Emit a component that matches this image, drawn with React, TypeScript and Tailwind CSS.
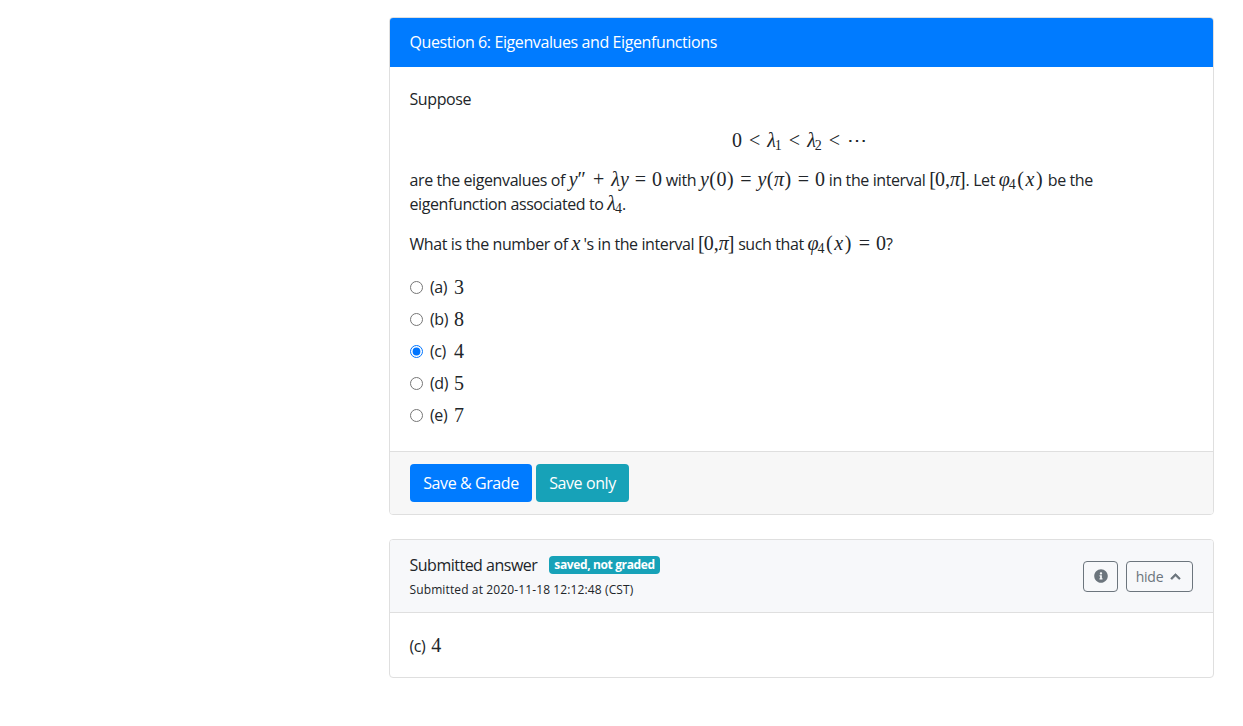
import { FaChevronUp, FaInfoCircle } from 'react-icons/fa';
import type { ReactNode } from 'react';

function Tex({ children, className = '' }: { children: ReactNode; className?: string }) {
  return (
    <span className={`font-['Liberation_Serif',serif] text-[20px] leading-none tracking-normal whitespace-nowrap ${className}`}>
      {children}
    </span>
  );
}

function V({ children }: { children: ReactNode }) {
  return <i>{children}</i>;
}

function Sub({ children }: { children: ReactNode }) {
  return <span className="text-[14px] leading-none relative top-[3px] ml-[-1px]">{children}</span>;
}

function Rel({ children }: { children: ReactNode }) {
  return <span className="mx-[6px]">{children}</span>;
}

function RelWide({ children }: { children: ReactNode }) {
  return <span className="mx-[7px]">{children}</span>;
}

function Paren({ children }: { children: ReactNode }) {
  return <span className="mx-[0.5px]">{children}</span>;
}

function ParenWide({ children }: { children: ReactNode }) {
  return <span className="mx-[1.5px]">{children}</span>;
}

function Interval() {
  return (
    <Tex>
      <span className="mr-[-1px]">[</span>0,
      <V>π</V>
      <span className="ml-[-1px]">]</span>
    </Tex>
  );
}

const options = [
  { key: 'a', value: '3' },
  { key: 'b', value: '8' },
  { key: 'c', value: '4', checked: true },
  { key: 'd', value: '5' },
  { key: 'e', value: '7' },
];

export default function App() {
  return (
    <div className="font-['Open_Sans','Noto_Sans',sans-serif] min-h-[726px] bg-white pl-[389px] pr-[29px] pt-[17px] text-[16px] leading-6 text-[#212529] tracking-[-0.4px]">
      <div className="rounded border border-[#dfdfdf] overflow-hidden">
        <div className="bg-[#007bff] text-white pl-[19.5px] pr-5 h-[49px] pb-px flex items-center">
          Question 6: Eigenvalues and Eigenfunctions
        </div>
        <div className="pl-[19.5px] pr-5 pt-5 pb-[19px]">
          <p className="mb-4">Suppose</p>
          <div className="h-[26px] mb-[15px] flex items-center justify-center">
            <Tex>
              0<RelWide>&lt;</RelWide>
              <V>λ</V>
              <Sub>1</Sub>
              <RelWide>&lt;</RelWide>
              <V>λ</V>
              <Sub>2</Sub>
              <RelWide>&lt;</RelWide>
              <span className="tracking-[3.5px]">⋯</span>
            </Tex>
          </div>
          <p className="mb-4">
            are the eigenvalues of{' '}
            <Tex>
              <V>y</V>″<span className="mx-[7px]">+</span>
              <V>λy</V>
              <Rel>=</Rel>0
            </Tex>{' '}
            with{' '}
            <Tex>
              <V>y</V>
              <Paren>(</Paren>0<Paren>)</Paren>
              <Rel>=</Rel>
              <V>y</V>
              <Paren>(</Paren>
              <V>π</V>
              <Paren>)</Paren>
              <Rel>=</Rel>0
            </Tex>{' '}
            in the interval <Interval />
            . Let{' '}
            <Tex>
              <V>φ</V>
              <Sub>4</Sub>
              <ParenWide>(</ParenWide>
              <V>x</V>
              <ParenWide>)</ParenWide>
            </Tex>{' '}
            be the
            <br />
            eigenfunction associated to{' '}
            <Tex>
              <V>λ</V>
              <Sub>4</Sub>
            </Tex>
            .
          </p>
          <p className="mb-4">
            What is the number of{' '}
            <Tex className="mr-[3px]">
              <V>x</V>
            </Tex>
            's in the interval <Interval /> such that{' '}
            <Tex>
              <V>φ</V>
              <Sub>4</Sub>
              <ParenWide>(</ParenWide>
              <V>x</V>
              <ParenWide>)</ParenWide>
              <Rel>=</Rel>0
            </Tex>
            ?
          </p>
          <div className="-mt-px">
            {options.map((o) => (
              <label key={o.key} className="flex items-center h-8">
                <input
                  type="radio"
                  name="answer"
                  defaultChecked={o.checked}
                  className="w-[13px] h-[13px] mr-[7.5px] m-0 shrink-0"
                />
                <span className="w-6">({o.key})</span>
                <Tex>{o.value}</Tex>
              </label>
            ))}
          </div>
        </div>
        <div className="border-t border-[#dfdfdf] bg-[#f7f7f7] px-5 py-3 mt-px flex gap-1">
          <button className="h-[38px] w-[122px] rounded bg-[#007bff] text-white">Save &amp; Grade</button>
          <button className="h-[38px] w-[93px] rounded bg-[#17a2b8] text-white">Save only</button>
        </div>
      </div>

      <div className="mt-6 rounded border border-[#dfdfdf] overflow-hidden">
        <div className="h-[73px] bg-[#f7f8fa] border-b border-[#dfdfdf] pl-[19.5px] pr-5 flex items-center justify-between">
          <div>
            <div className="flex items-center h-6 -mt-px">
              <span className="tracking-[-0.5px]">Submitted answer</span>
              <span className="ml-3 h-[18px] px-[5px] rounded bg-[#17a2b8] text-white text-[12px] font-bold leading-[18px] tracking-[-0.37px]">
                saved, not graded
              </span>
            </div>
            <div className="text-[12px] leading-[18px] mt-1 tracking-[0.12px]">
              Submitted at 2020-11-18 12:12:48 (CST)
            </div>
          </div>
          <div className="flex gap-2 text-[#6c757d]">
            <button className="w-[35px] h-[31px] rounded border border-[#6c757d] flex items-center justify-center" aria-label="info">
              <FaInfoCircle className="w-[14px] h-[14px]" />
            </button>
            <button className="w-[67px] h-[31px] pr-[2px] pt-px rounded border border-[#6c757d] flex items-center justify-center gap-[7px] text-[14px] tracking-[-0.2px]">
              hide
              <FaChevronUp className="w-[11px] h-[11px] stroke-[30]" />
            </button>
          </div>
        </div>
        <div className="h-16 pt-[2px] pl-[19.5px] pr-5 flex items-center">
          <span>
            (c) <Tex className="ml-[2px]">4</Tex>
          </span>
        </div>
      </div>
    </div>
  );
}
